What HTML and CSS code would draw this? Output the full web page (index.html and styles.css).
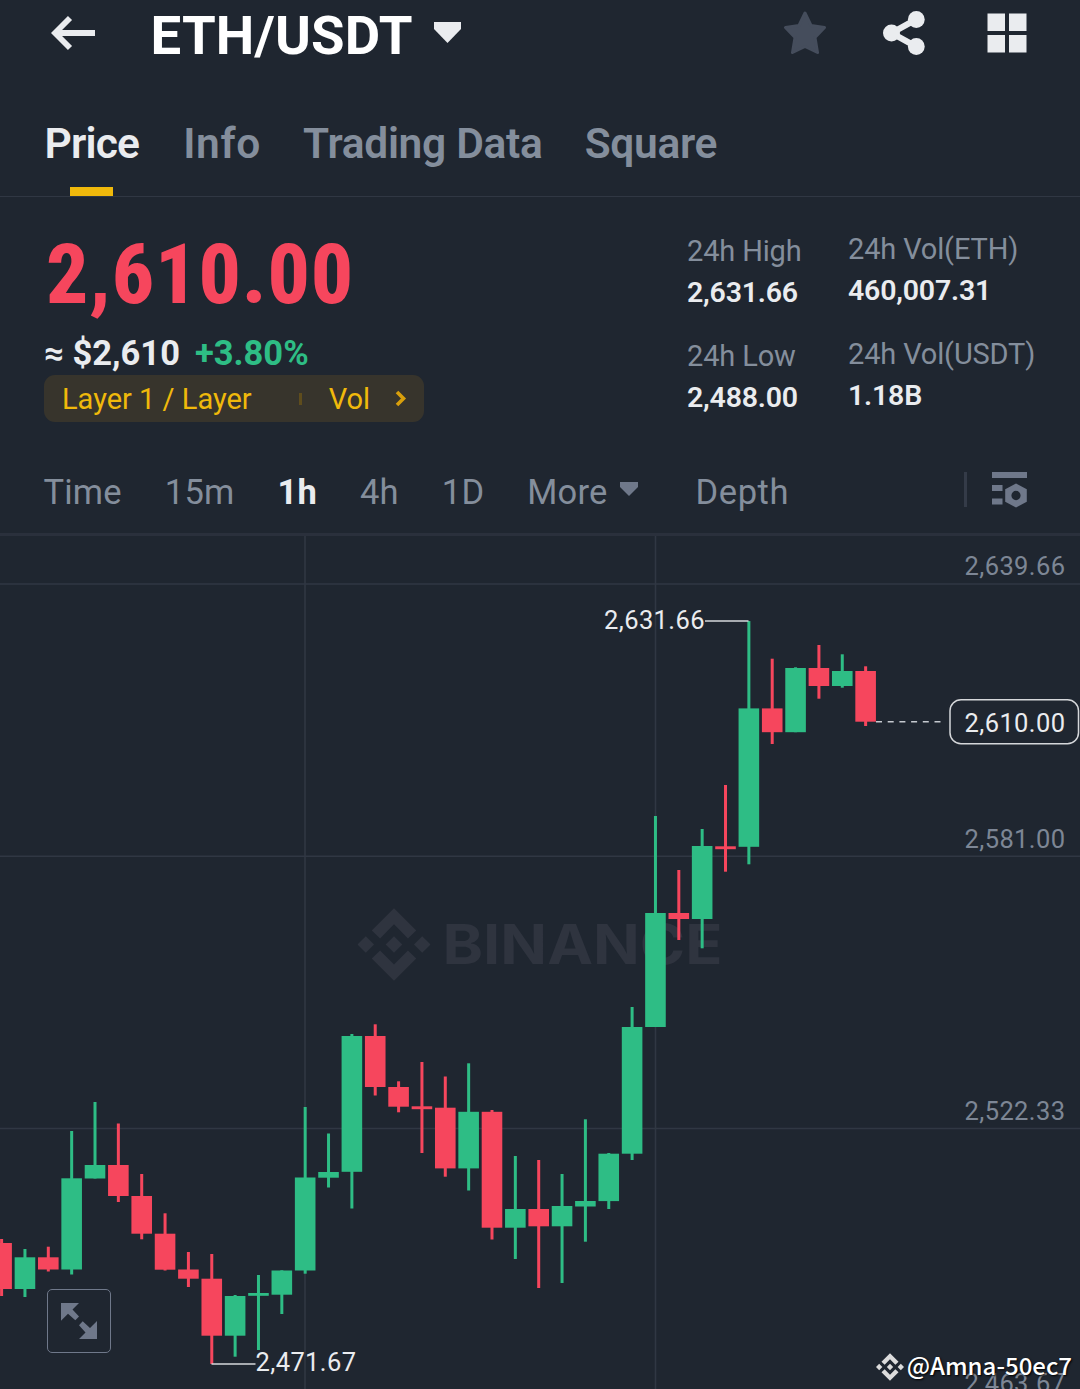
FILE: index.html
```html
<!DOCTYPE html>
<html lang="en">
<head>
  <meta charset="UTF-8">
  <title>ETH/USDT</title>
  <meta name="viewport" content="width=device-width, initial-scale=1">
  <link rel="stylesheet" href="styles.css">
</head>
<body>
  <svg width="0" height="0" class="defs">
    <symbol id="logo" viewBox="52 54 220 218">
      <path d="M162 54L229 121L204 145L162 102L120 145L95 121Z"/>
      <path d="M162 272L229 205L204 181L162 223L120 181L95 205Z"/>
      <path d="M52 163L77 138L102 163L77 188Z"/>
      <path d="M137 163L162 138L187 163L162 188Z"/>
      <path d="M222 163L247 138L272 163L247 188Z"/>
    </symbol>
  </svg>

  <header class="header">
    <svg class="back" width="44" height="36" viewBox="0 0 44 36">
      <path d="M19 3L4 18L19 33M4.5 18H44" fill="none" stroke="#eaecef" stroke-width="5.8"/>
    </svg>
    <h1>ETH/USDT</h1>
    <svg class="caret" width="27" height="21" viewBox="0 0 27 21">
      <path d="M0 0H27V7L13.5 21L0 7Z" fill="#eaecef"/>
    </svg>
    <div class="actions">
      <svg width="44" height="44" viewBox="0 0 44 44">
        <path d="M22 2L28 14.5L41.5 16.5L32 26.5L34.5 41.5L22 35.5L9.5 41.5L12 26.5L2.5 16.5L16 14.5Z" fill="#454d5c" stroke="#454d5c" stroke-width="3" stroke-linejoin="round"/>
      </svg>
      <svg width="42" height="44" viewBox="0 0 42 44">
        <path d="M33 8.5L8.5 22L33 35.5" fill="none" stroke="#eaecef" stroke-width="6"/>
        <circle cx="33.3" cy="8.5" r="8.4" fill="#eaecef"/>
        <circle cx="8.5" cy="22" r="8.5" fill="#eaecef"/>
        <circle cx="33.3" cy="35.5" r="8.4" fill="#eaecef"/>
      </svg>
      <svg width="40" height="40" viewBox="0 0 40 40">
        <path d="M.5 .5H18V18H.5ZM22 .5H39.5V18H22ZM.5 22H18V39.5H.5ZM22 22H39.5V39.5H22Z" fill="#eaecef"/>
      </svg>
    </div>
  </header>

  <nav class="tabs">
    <a class="tab active">Price</a>
    <a class="tab info">Info</a>
    <a class="tab">Trading Data</a>
    <a class="tab">Square</a>
  </nav>

  <section class="overview">
    <div class="quote">
      <div class="price">2,610.00</div>
      <div class="sub"><span>≈ $2,610</span><span class="change">+3.80%</span></div>
      <div class="tags">
        <span>Layer 1 / Layer</span>
        <i class="tag-line"></i>
        <span>Vol</span>
        <svg width="12" height="17" viewBox="0 0 12 17">
          <path d="M2 2L8.5 8.5L2 15" fill="none" stroke="#d89f0c" stroke-width="3.6"/>
        </svg>
      </div>
    </div>
    <div class="stats">
      <dl><dt>24h High</dt><dd>2,631.66</dd></dl>
      <dl><dt>24h Low</dt><dd>2,488.00</dd></dl>
    </div>
    <div class="stats volume">
      <dl><dt>24h Vol(ETH)</dt><dd>460,007.31</dd></dl>
      <dl><dt>24h Vol(USDT)</dt><dd>1.18B</dd></dl>
    </div>
  </section>

  <nav class="intervals">
    <a>Time</a>
    <a>15m</a>
    <a class="active">1h</a>
    <a>4h</a>
    <a>1D</a>
    <a class="more">More
      <svg width="18" height="14" viewBox="0 0 18 14"><path d="M0 0H18V5L9 14L0 5Z" fill="#6f788a"/></svg>
    </a>
    <a class="depth">Depth</a>
    <i class="divider"></i>
    <svg class="settings" width="35" height="36" viewBox="0 0 35 36" fill="#6f788a">
      <path d="M0 0H35V6H0ZM0 13H10.5V19H0ZM0 26.5H10.5V32.5H0Z"/>
      <path fill-rule="evenodd" d="M24 11.5L34.8 17.3V29.7L24 35.5L13.2 29.7V17.3ZM24 18.8A4.6 4.7 0 1 0 24 28.2A4.6 4.7 0 1 0 24 18.8Z"/>
    </svg>
  </nav>

  <main class="chart">
    <svg width="1080" height="853" viewBox="0 536 1080 853">
      <g fill="#2f343f">
        <use href="#logo" x="357.5" y="908" width="73" height="73"/>
        <text class="watermark" x="442.5" y="964" textLength="280" lengthAdjust="spacingAndGlyphs">BINANCE</text>
      </g>
      <path d="M305 536V1389M655.5 536V1389M0 584H1080M0 856.3H1080M0 1128.5H1080" stroke="#303743" stroke-width="1.6"/>
      <g id="candles"></g>
      <path d="M705 621H748.5M211.5 1364H255.5" stroke="#d5d7da" stroke-width="1.5"/>
      <path d="M876 721.7H941" stroke="#c5c9cf" stroke-width="1.5" stroke-dasharray="6 5.7"/>
      <g class="mark">
        <text x="604" y="629">2,631.66</text>
        <text x="255.5" y="1371">2,471.67</text>
      </g>
      <g class="axis">
        <text x="964.5" y="575">2,639.66</text>
        <text x="964.5" y="848">2,581.00</text>
        <text x="964.5" y="1120">2,522.33</text>
        <text x="964.5" y="1392">2,463.67</text>
      </g>
      <rect x="950" y="699.8" width="128.5" height="44" rx="11" fill="#1f2630" stroke="#d5d7da" stroke-width="1.5"/>
      <text class="last" x="964.5" y="732">2,610.00</text>
    </svg>

    <button class="expand">
      <svg width="36" height="36" viewBox="0 0 36 36" fill="#6f788a">
        <path d="M0 0H18L11.5 6.5L18 13.5L14.3 17.3L7 10.7L0 17.7Z"/>
        <path d="M36 36H18L24.5 29.5L18 22.2L21.7 18.3L29 25L36 18Z"/>
      </svg>
    </button>

    <div class="credit">
      <svg width="28" height="28" fill="#dcdcdc"><use href="#logo"/></svg>
      <span>@Amna-50ec7</span>
    </div>
  </main>

  <script>
    // [up, high, body top, body bottom, low]
    const data = [
      [0, 1239, 1243, 1289, 1296], [1, 1249, 1257.3, 1289, 1297], [0, 1246.7, 1257.3, 1269.5, 1271.5],
      [1, 1131, 1178.3, 1269.5, 1274.5], [1, 1102, 1165, 1178.5, 1178.5], [0, 1123.5, 1165, 1196, 1202],
      [0, 1174, 1196, 1233.7, 1239.3], [0, 1213.3, 1233.7, 1269.7, 1270.5], [0, 1252, 1269.5, 1278.7, 1287],
      [0, 1254, 1278.7, 1335.7, 1364], [1, 1295, 1296, 1335.7, 1356.7], [1, 1275, 1293, 1295.8, 1350],
      [1, 1270.3, 1270.5, 1294.7, 1314], [1, 1107, 1177.5, 1270.5, 1273.7], [1, 1133.5, 1172, 1177.7, 1187.5],
      [1, 1034, 1036, 1171.8, 1208.5], [0, 1024.3, 1036, 1087, 1095.5], [0, 1081.3, 1087, 1106.7, 1112.3],
      [0, 1062, 1106.3, 1109.2, 1153], [0, 1076.5, 1107.7, 1168.4, 1176.7], [1, 1063.3, 1111.8, 1168.4, 1190.5],
      [0, 1110, 1111.8, 1227.7, 1239.5], [1, 1156, 1209, 1227.7, 1259], [0, 1160, 1209, 1226.3, 1288],
      [1, 1174, 1206, 1226.3, 1283], [1, 1119.3, 1201, 1206.5, 1241.7], [1, 1153, 1153.7, 1201.1, 1209],
      [1, 1007, 1027, 1153.7, 1160], [1, 816, 913, 1027, 1027], [0, 870, 913, 919, 940],
      [1, 829, 846, 919, 948.3], [0, 785, 846.3, 849.2, 871.7], [1, 621, 708.4, 846.8, 864.3],
      [0, 658.7, 708.4, 732.2, 744], [1, 667.3, 668, 732.2, 732.2], [0, 645, 668, 686, 698.7],
      [1, 654.3, 671, 686, 687.7], [0, 666.3, 671, 721.7, 726]
    ];
    let svg = '';
    data.forEach(function(c, i) {
      const x = 1.6 + i * 23.352;
      svg += `<g class="${c[0] ? 'up' : 'down'}">
        <rect x="${x - 1.5}" y="${c[1]}" width="3" height="${c[4] - c[1]}"/>
        <rect x="${x - 10.3}" y="${c[2]}" width="20.6" height="${c[3] - c[2]}"/></g>`;
    });
    document.getElementById('candles').innerHTML = svg;
  </script>
</body>
</html>
```
FILE: styles.css
```css
* {
  box-sizing: border-box;
}

body {
  margin: 0;
  width: 1080px;
  height: 1389px;
  overflow: hidden;
  background: #1f2630;
  color: #eaecef;
  font-family: Roboto, "Liberation Sans", sans-serif;
}

svg {
  display: block;
  flex-shrink: 0;
}

.defs {
  position: absolute;
}

.header {
  display: flex;
  align-items: center;
  height: 66px;
  padding: 0 53px 0 51px;
}

h1 {
  margin: 0 0 0 55.5px;
  padding-top: 3px;
  font-size: 54.5px;
  line-height: 62px;
  letter-spacing: 0.2px;
  color: #fff;
}

.caret {
  margin: -1px 0 0 21.5px;
}

.actions {
  display: flex;
  align-items: center;
  margin-left: auto;
}

.actions svg + svg {
  margin-left: 56.5px;
}

.actions svg:last-child {
  margin-left: 62px;
}

.tabs {
  display: flex;
  gap: 42px;
  height: 131px;
  padding: 47px 0 0 44.5px;
  border-bottom: 1px solid #303743;
}

.tab {
  position: relative;
  font-size: 42.5px;
  line-height: 61px;
  font-weight: 600;
  letter-spacing: -0.3px;
  color: #848e9c;
}

.tab.info {
  letter-spacing: 0.7px;
}

.tab.active {
  margin-right: 2px;
  letter-spacing: -0.8px;
  color: #eaecef;
}

.tab.active::after {
  content: "";
  position: absolute;
  left: 50%;
  bottom: 0;
  width: 43px;
  height: 9px;
  margin-left: -22px;
  background: #f0b90b;
}

.overview {
  display: flex;
  height: 253px;
  padding: 33px 0 0 44px;
}

.quote {
  width: 643px;
}

.price {
  padding-left: 2px;
  font-size: 83.5px;
  line-height: 89px;
  font-weight: 800;
  font-stretch: 75%;
  letter-spacing: 0.9px;
  color: #f6465d;
}

.sub {
  display: flex;
  gap: 15px;
  margin-top: 12px;
  font-size: 34.5px;
  line-height: 44px;
  font-weight: 700;
}

.change {
  color: #2ebd85;
}

.tags {
  display: flex;
  align-items: center;
  width: 380px;
  height: 47px;
  padding: 0 17px 0 18px;
  border-radius: 11px;
  background: #37342c;
  color: #f0b90b;
  font-size: 29px;
}

.tag-line {
  width: 3px;
  height: 12px;
  margin: 0 27px 0 47px;
  background: #5f4d1d;
}

.tags svg {
  margin-left: auto;
}

.stats {
  width: 161px;
  padding-top: 1px;
  white-space: nowrap;
}

.stats.volume {
  margin-top: -2px;
}

dl {
  margin: 0 0 23px;
  line-height: 41px;
}

dt {
  font-size: 29px;
  letter-spacing: -0.15px;
  color: #848e9c;
}

dd {
  margin: 0;
  font-size: 28.5px;
  font-weight: 600;
  letter-spacing: -0.2px;
}

.intervals {
  display: flex;
  align-items: center;
  gap: 43px;
  height: 86px;
  padding: 0 53px 0 43.5px;
  border-bottom: 3px solid #2a303c;
  font-size: 34.5px;
  letter-spacing: 0.2px;
  color: #848e9c;
}

.intervals .active {
  font-weight: 700;
  color: #eaecef;
}

.more {
  display: flex;
  gap: 12px;
}

.more svg {
  margin-top: 10px;
}

.depth {
  margin-left: 15px;
  letter-spacing: 0.6px;
}

.divider {
  width: 3px;
  height: 35px;
  margin: -4px -18px 0 auto;
  background: #343b48;
}

.settings {
  margin-top: -4px;
}

.chart {
  position: relative;
  height: 853px;
}

.watermark {
  font: 700 55px Inter, sans-serif;
}

.up {
  fill: #2ebd85;
}

.down {
  fill: #f6465d;
}

.axis,
.mark,
.last {
  font-size: 25.5px;
  letter-spacing: 0.4px;
  fill: #eaecef;
}

.axis {
  fill: #7d8695;
}

.expand {
  position: absolute;
  left: 46.5px;
  top: 753px;
  width: 64px;
  height: 64px;
  padding: 0 0 0 13px;
  border: 1.5px solid #6f788a;
  border-radius: 5px;
  background: none;
}

.credit {
  position: absolute;
  right: 8px;
  bottom: 6px;
  display: flex;
  align-items: center;
  gap: 3px;
  font: 500 24px/36px "Noto Sans CJK SC", sans-serif;
  color: #fff;
  text-shadow: 1px 1px 2px #000;
}

.credit span {
  margin-top: -3px;
}
```
